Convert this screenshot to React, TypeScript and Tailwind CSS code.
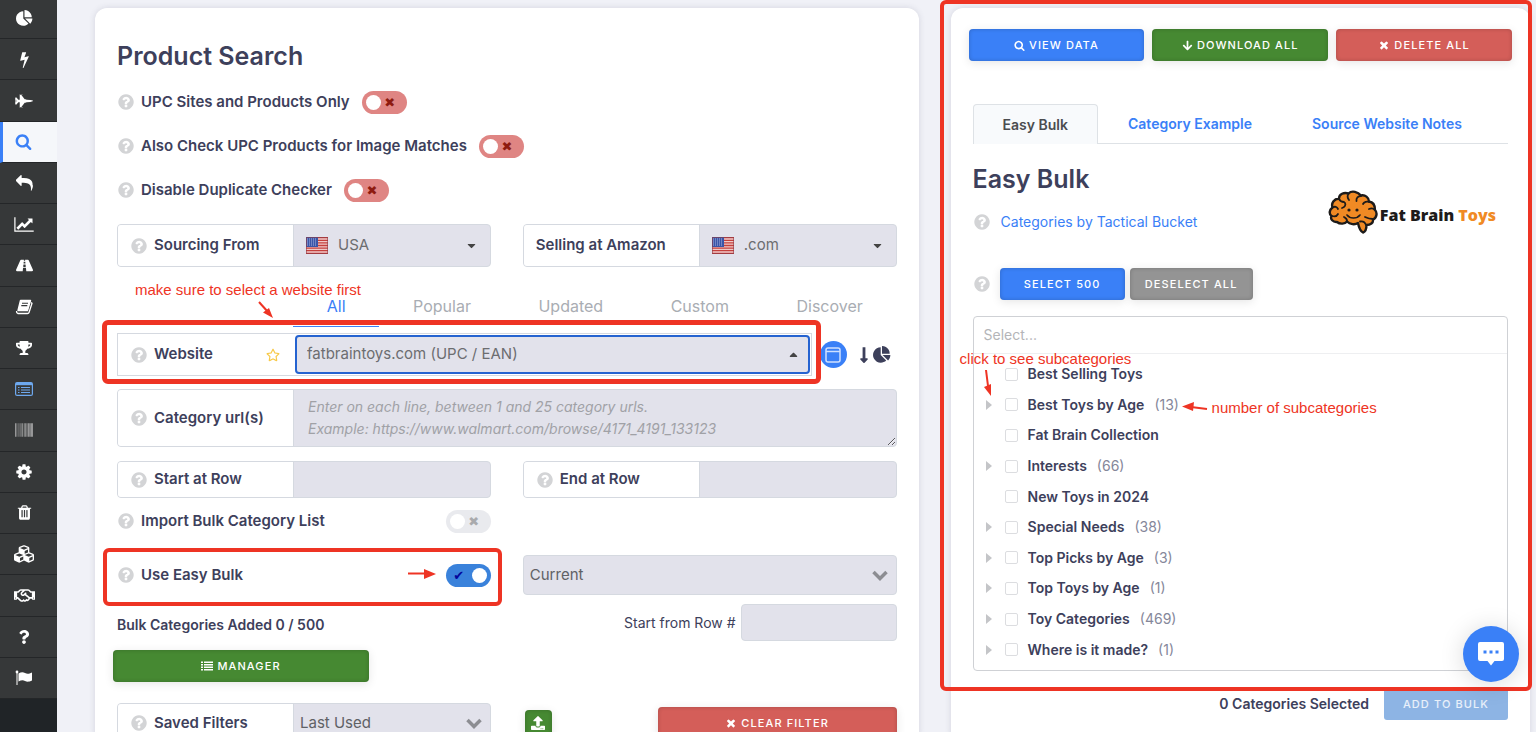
import React from "react";
import {
  FaArrowDown,
  FaBarcode,
  FaCaretDown,
  FaCaretUp,
  FaCubes,
  FaFighterJet,
  FaLongArrowAltDown,
  FaQuestion,
  FaRegHandshake,
  FaRegStar,
  FaRoad,
  FaTrophy,
  FaUpload,
} from "react-icons/fa";

const paths = {
  pie: "M768 890l546 546q-106 108-247.5 168t-298.500 60q-209 0-385.500-103t-279.500-279.500-103-385.500 103-385.500 279.500-279.500 385.500-103v762zm187 6h773q0 157-60 298.500t-168 247.500zm709-128h-768v-768q209 0 385.500 103t279.500 279.500 103 385.500z",
  bolt: "M1333 566q18 20 7 44l-540 1157q-13 25-42 25-4 0-14-2-17-5-25.500-19t-4.500-30l197-808-406 101q-4 1-12 1-18 0-31-11-18-15-13-39l201-825q4-14 16-23t28-9h328q19 0 32 12.500t13 29.500q0 8-5 18l-171 463 396-98q8-2 12-2 19 0 34 15z",
  search:
    "M1216 832q0-185-131.500-316.500t-316.500-131.500-316.500 131.500-131.500 316.500 131.500 316.500 316.500 131.500 316.500-131.500 131.500-316.500zm512 832q0 52-38 90t-90 38q-54 0-90-38l-343-342q-179 124-399 124-143 0-273.500-55.500t-225-150-150-225-55.500-273.500 55.500-273.500 150-225 225-150 273.500-55.500 273.500 55.500 225 150 150 225 55.500 273.500q0 220-124 399l343 343q37 37 37 90z",
  reply:
    "M1792 1120q0 166-127 451-3 7-10.500 24t-13.500 30-13 22q-12 17-28 17-15 0-23.500-10t-8.500-25q0-9 2.500-26.500t2.500-23.500q5-68 5-123 0-112-19.500-200.500t-54-153.500-89-112-115-79.500-137-48.500-161.500-24.500-181-8h-224v256q0 26-19 45t-45 19-45-19l-512-512q-19-19-19-45t19-45l512-512q19-19 45-19t45 19 19 45v256h224q713 0 875 403 53 134 53 333z",
  times:
    "M1490 1322q0 40-28 68l-136 136q-28 28-68 28t-68-28l-294-294-294 294q-28 28-68 28t-68-28l-136-136q-28-28-28-68t28-68l294-294-294-294q-28-28-28-68t28-68l136-136q28-28 68-28t68 28l294 294 294-294q28-28 68-28t68 28l136 136q28 28 28 68t-28 68l-294 294 294 294q28 28 28 68z",
  cog: "M1152 896q0-106-75-181t-181-75-181 75-75 181 75 181 181 75 181-75 75-181zm512-109v222q0 12-8 23t-20 13l-185 28q-19 54-39 91 35 50 107 138 10 12 10 25t-9 23q-27 37-99 108t-94 71q-12 0-26-9l-138-108q-44 23-91 38-16 136-29 186-7 28-36 28h-222q-14 0-24.500-8.500t-11.500-21.500l-28-184q-49-16-90-37l-141 107q-10 9-25 9-14 0-25-11-126-114-165-168-7-10-7-23 0-12 8-23 15-21 51-66.500t54-70.500q-27-50-41-99l-183-27q-13-2-21-12.500t-8-23.500v-222q0-12 8-23t19-13l186-28q14-46 39-92-40-57-107-138-10-12-10-24 0-10 9-23 26-36 98.500-107.500t94.500-71.500q13 0 26 10l138 107q44-23 91-38 16-136 29-186 7-28 36-28h222q14 0 24.500 8.500t11.500 21.500l28 184q49 16 90 37l142-107q9-9 24-9 13 0 25 10 129 119 165 170 7 8 7 22 0 12-8 23-15 21-51 66.500t-54 70.500q26 50 41 98l183 28q13 2 21 12.500t8 23.500z",
  trash:
    "M704 1376v-704q0-14-9-23t-23-9h-64q-14 0-23 9t-9 23v704q0 14 9 23t23 9h64q14 0 23-9t9-23zm256 0v-704q0-14-9-23t-23-9h-64q-14 0-23 9t-9 23v704q0 14 9 23t23 9h64q14 0 23-9t9-23zm256 0v-704q0-14-9-23t-23-9h-64q-14 0-23 9t-9 23v704q0 14 9 23t23 9h64q14 0 23-9t9-23zm-544-992h448l-48-117q-7-9-17-11h-317q-10 2-17 11zm928 32v64q0 14-9 23t-23 9h-96v948q0 83-47 143.500t-113 60.500h-832q-66 0-113-58.500t-47-141.500v-952h-96q-14 0-23-9t-9-23v-64q0-14 9-23t23-9h309l70-167q15-37 54-63t79-26h320q40 0 79 26t54 63l70 167h309q14 0 23 9t9 23z",
  help: "M1024 1376v-192q0-14-9-23t-23-9h-192q-14 0-23 9t-9 23v192q0 14 9 23t23 9h192q14 0 23-9t9-23zm256-672q0-88-55.500-163t-138.500-116-170-41q-243 0-371 213-15 24 8 42l132 100q7 6 19 6 16 0 25-12 53-68 86-92 34-24 86-24 48 0 85.500 26t37.500 59q0 38-20 61t-68 45q-63 28-115.500 86.500t-52.500 125.500v36q0 14 9 23t23 9h192q14 0 23-9t9-23q0-19 21.500-49.500t54.500-49.500q32-18 49-28.500t46-35 44.500-48 28-60.500 12.500-81zm384 192q0 209-103 385.500t-279.500 279.500-385.500 103-385.500-103-279.500-279.500-103-385.500 103-385.500 279.500-279.500 385.500-103 385.500 103 279.500 279.500 103 385.500z",
};

const Glyph = ({ name, className }: { name: keyof typeof paths; className?: string }) => (
  <svg viewBox="0 0 1792 1792" fill="currentColor" className={className} aria-hidden="true">
    <path d={paths[name]} />
  </svg>
);

const LineChart = () => (
  <svg viewBox="0 0 2048 1792" fill="currentColor" className="h-[17px] w-5">
    <path d="M2048 1536v128h-2048v-1536h128v1408h1920zm-128-1248v435q0 21-19.500 29.500t-35.500-7.500l-121-121-633 633q-10 10-23 10t-23-10l-233-233-416 416-192-192 585-585q10-10 23-10t23 10l233 233 464-464-121-121q-16-16-7.500-35.500t29.500-19.500h435q14 0 23 9t9 23z" />
  </svg>
);

const BookIcon = () => (
  <svg viewBox="0 0 18 16" className="h-4 w-[18px]" fill="none" stroke="currentColor" strokeLinejoin="round">
    <path d="M5.500 1.500h10L12.500 11.500H3z" fill="currentColor" strokeWidth="1.400" />
    <path d="M16 3.500l1 .8-3 9.200q-.3 1-1.500 1H3q-1.700-.3-1.500-2.500" strokeWidth="1.300" />
    <path d="M7 4.200h6M6.300 6.600h6" stroke="#363839" strokeWidth="1.100" />
  </svg>
);

const ListAlt = () => (
  <svg viewBox="0 0 18 14" className="h-[14px] w-[18px]" fill="none" stroke="currentColor">
    <rect x=".6" y=".6" width="16.800" height="12.800" rx="1.500" strokeWidth="1.200" />
    <path d="M1 2h16" strokeWidth="2.400" />
    <path d="M3 5.500h1.500M6 5.500h9M3 8h1.500M6 8h9M3 10.500h1.500M6 10.500h9" strokeWidth="1.200" />
  </svg>
);

const FlagIcon = () => (
  <svg viewBox="0 0 18 16" className="h-4 w-[18px]" fill="currentColor">
    <circle cx="2" cy="2" r="1.400" />
    <path d="M1.500 2h1v13h-1zM3.500 3.500C6 2 8 1.800 10 3s4 1 7-.5v8c-3 1.500-5 1.500-7 .4s-4-.8-6.500.7z" />
  </svg>
);

const ListIcon = () => (
  <svg viewBox="0 0 12 10" className="h-2.5 w-3" fill="none" stroke="currentColor" strokeWidth="1.600">
    <path d="M0 1.200h2M3 1.200h9M0 3.700h2M3 3.700h9M0 6.200h2M3 6.200h9M0 8.700h2M3 8.700h9" />
  </svg>
);

const menu = [
  { label: "Dashboard", icon: <Glyph name="pie" className="size-[17px]" /> },
  { label: "Quick actions", icon: <Glyph name="bolt" className="size-[17px]" /> },
  { label: "Jet", icon: <FaFighterJet size={18} /> },
  { label: "Product search", icon: <Glyph name="search" className="size-[17px]" />, active: true },
  { label: "Back", icon: <Glyph name="reply" className="size-[17px]" /> },
  { label: "Charts", icon: <LineChart /> },
  { label: "Roadmap", icon: <FaRoad size={17} /> },
  { label: "Guides", icon: <BookIcon /> },
  { label: "Trophies", icon: <FaTrophy size={16} /> },
  { label: "Lists", icon: <ListAlt />, blue: true },
  { label: "Barcodes", icon: <FaBarcode size={18} className="opacity-70" /> },
  { label: "Settings", icon: <Glyph name="cog" className="size-[18px]" /> },
  { label: "Trash", icon: <Glyph name="trash" className="size-[17px]" /> },
  { label: "Inventory", icon: <FaCubes size={20} /> },
  { label: "Partners", icon: <FaRegHandshake size={21} /> },
  { label: "Help", icon: <FaQuestion size={14} /> },
  { label: "Reports", icon: <FlagIcon /> },
];

const categories = [
  { name: "Best Selling Toys" },
  { name: "Best Toys by Age", count: 13 },
  { name: "Fat Brain Collection" },
  { name: "Interests", count: 66 },
  { name: "New Toys in 2024" },
  { name: "Special Needs", count: 38 },
  { name: "Top Picks by Age", count: 3 },
  { name: "Top Toys by Age", count: 1 },
  { name: "Toy Categories", count: 469 },
  { name: "Where is it made?", count: 1 },
];

const Help = () => <Glyph name="help" className="size-[18px] shrink-0 text-[#d3d4d6]" />;

const Toggle = ({ id, kind }: { id: string; kind: "off" | "on" | "disabled" }) => {
  const track = {
    off: "bg-[#df8583] text-[#8e1b10]",
    on: "bg-[#3a82db] text-[#04059a] flex-row-reverse",
    disabled: "bg-[#e9eaee] text-[#a9aaad]",
  }[kind];
  return (
    <label htmlFor={id} className={`relative flex h-[23px] w-[45px] shrink-0 items-center justify-between rounded-full px-1 ${track}`}>
      <input id={id} type="checkbox" className="sr-only" defaultChecked={kind === "on"} disabled={kind === "disabled"} />
      <span className="size-[15px] rounded-full bg-white" />
      <span className="w-[22px] pr-1 text-center font-['DejaVu_Sans',sans-serif] text-[13px] leading-none">
        {kind === "on" ? "✔" : "✖"}
      </span>
    </label>
  );
};

const UsFlag = () => (
  <svg viewBox="0 0 22 17" className="h-[17px] w-[22px] shrink-0">
    <rect width="22" height="17" fill="#efc9c8" />
    <path d="M0 .7h22M0 3.300h22M0 5.900h22M0 8.500h22M0 11.100h22M0 13.700h22M0 16.300h22" stroke="#c5403c" strokeWidth="1.300" />
    <rect width="12" height="10" fill="#3a55a8" />
    <path d="M1 2h10M1 4h10M1 6h10M1 8h10" stroke="#a9b6e0" strokeDasharray="1 1" />
    <rect x=".5" y=".5" width="21" height="16" fill="none" stroke="#8c3a44" strokeOpacity=".6" />
  </svg>
);

const Chevron = () => (
  <svg viewBox="0 0 16 11" className="pointer-events-none h-[11px] w-4 shrink-0" fill="none" stroke="#8c8d92" strokeWidth="3.500">
    <path d="M1.500 2L8 8.500 14.500 2" />
  </svg>
);

/* label cell on the left, control cell on the right */
const Field = ({
  id,
  label,
  help = true,
  className,
  children,
}: {
  id: string;
  label: string;
  help?: boolean;
  className: string;
  children?: React.ReactNode;
}) => (
  <div className={`flex overflow-hidden rounded-[4px] border border-[#d5d9e0] bg-[#e2e2eb] ${className}`}>
    <label htmlFor={id} className="flex w-[176px] shrink-0 items-center gap-1.5 border-r border-[#d5d9e0] bg-white px-3 text-[15px] font-semibold">
      {help && <Help />}
      {label}
    </label>
    {children}
  </div>
);

const RedArrow = ({ className, width, height, d, head }: { className: string; width: number; height: number; d: string; head: string }) => (
  <svg className={`pointer-events-none absolute ${className}`} width={width} height={height} fill="#ee3424" aria-hidden="true">
    <path d={d} stroke="#ee3424" strokeWidth="2" />
    <path d={head} />
  </svg>
);

const noteText =
  "pointer-events-none absolute whitespace-nowrap font-['Liberation_Sans',Arial,sans-serif] text-[15px] leading-4 text-[#ee3424]";

const btn =
  "flex items-center justify-center gap-1 rounded-[4px] text-[11px] font-medium tracking-widest text-white shadow-[0_2px_10px_rgba(0,0,0,0.1),inset_0_0_4px_rgba(0,0,0,0.2)]";

const Brain = () => (
  <svg viewBox="0 0 50 44" className="h-11 w-[50px]" fill="#f08a24" stroke="#1d1b1a" strokeWidth="2.400" strokeLinejoin="round" strokeLinecap="round">
    <path d="M30 33c1 5 2 8 5 9.500 3-1 3.500-4 3.500-7.500 4 0 7-2 6.500-5.500 4-2 4.500-7 2-9.500 0-5-2-8-6-8.500 0-4-4-7-8-6C30 2 24 0 20.500 3.500 16 2 11 4 11 8.500 6 9 3 13 4.500 17.500 1 20 1 24 3.500 26 2 29 5 32.500 9 32c3 2.500 8 2 10-.5 3 3 8 3.500 11 1.500z" />
    <path d="M11 9c1 2 2.500 3 5 3M20.500 4c-1.500 2-1 4 .5 6M33 6c-3 0-5 2-4.500 5M41 12c-2-1-5 0-6 2M47 20c-2-2-4-2-6-1M4.500 17.500C7 16 9 17 10 19M4 26c3 1 5 0 6-2M19 31c0-2-1-3-3-4M38 35c-1-3-3-4-6-3.500M14 18c3-1 4-3 3-5M37 27c2 1 5 2 8 2" fill="none" strokeWidth="1.800" />
    <path d="M19 25c3 4 10 4 13 0" fill="none" strokeWidth="1.600" />
    <circle cx="21" cy="20" r="1.600" fill="#1d1b1a" stroke="none" />
    <circle cx="29" cy="20" r="1.600" fill="#1d1b1a" stroke="none" />
  </svg>
);

const Sidebar = () => (
  <aside className="w-[57px] shrink-0 overflow-hidden bg-[#202427]">
    <nav className="-mt-0.5 flex h-[701px] flex-col">
      {menu.map((item) => (
        <a
          key={item.label}
          href="#"
          aria-label={item.label}
          className={`flex flex-1 items-center justify-center border-b ${
            item.active
              ? "border-b-[#242628] border-l-[3px] border-l-[#3a80f7] bg-[#f5f7fa] pr-[14px] text-[#3a80f7]"
              : item.blue
                ? "border-[#242628] bg-[#363839] pr-[9px] text-[#6ea8ee]"
                : "border-[#242628] bg-[#363839] pr-[9px] text-white"
          }`}
        >
          {item.icon}
        </a>
      ))}
    </nav>
  </aside>
);

const ProductSearch = () => (
  <section className="rounded-xl bg-white px-[22px] pt-8 shadow-[0_0_6px_rgba(60,60,90,0.15)]">
    <h1 className="text-[25px] leading-8 font-semibold">Product Search</h1>

    <div className="mt-2 text-[15px] font-semibold">
      {["UPC Sites and Products Only", "Also Check UPC Products for Image Matches", "Disable Duplicate Checker"].map((text, i) => (
        <div key={text} className="flex h-11 items-center">
          <Help />
          <label htmlFor={`option-${i}`} className="mr-3 ml-1.5">
            {text}
          </label>
          <Toggle id={`option-${i}`} kind="off" />
        </div>
      ))}
    </div>

    <div className="mt-3 grid grid-cols-2 gap-8">
      <Field id="source" label="Sourcing From" className="h-[43px]">
        <div className="flex flex-1 items-center gap-[10px] px-3">
          <UsFlag />
          <select id="source" className="min-w-0 flex-1 appearance-none bg-transparent text-[15px] text-[#6c6d70]">
            <option>USA</option>
          </select>
          <FaCaretDown size={13} color="#444" />
        </div>
      </Field>
      <Field id="amazon" label="Selling at Amazon" help={false} className="h-[43px]">
        <div className="flex flex-1 items-center gap-[10px] px-3">
          <UsFlag />
          <select id="amazon" className="min-w-0 flex-1 appearance-none bg-transparent text-[15px] text-[#6c6d70]">
            <option>.com</option>
          </select>
          <FaCaretDown size={13} color="#444" />
        </div>
      </Field>
    </div>

    <div className="relative mt-[18px] flex h-[42px] pl-[176px] text-base text-[#a9adb3]">
      <button className="flex-auto border-b border-[#3a80f7] px-8 text-[#3a80f7]">All</button>
      {["Popular", "Updated", "Custom", "Discover"].map((tab) => (
        <button key={tab} className="flex-auto px-8">
          {tab}
        </button>
      ))}
      <span className={`${noteText} -top-[3px] left-[18px]`}>make sure to select a website first</span>
      <RedArrow className="top-4 left-[141px]" width={16} height={18} d="M1 1l9 10" head="M15 17L5 11.500 11 7z" />
    </div>

    <div className="mt-1.5 flex items-center">
      <div className="relative flex h-[43px] flex-1 border border-[#d5d9e0]">
        <div className="flex w-[176px] items-center gap-1.5 pr-[14px] pl-3">
          <Help />
          <label htmlFor="website" className="flex-1 text-[15px] font-semibold">
            Website
          </label>
          <FaRegStar size={14} color="#f7c948" />
        </div>
        <div className="m-px flex flex-1 items-center rounded-[4px] border-2 border-[#2563d0] bg-[#e2e2eb] pr-2 pl-2.5">
          <select id="website" className="flex-1 appearance-none bg-transparent text-[15px] text-[#6c6d70]">
            <option>fatbraintoys.com (UPC / EAN)</option>
          </select>
          <FaCaretUp size={13} color="#444" />
        </div>
        <div className="pointer-events-none absolute -top-[14px] -right-2.5 -bottom-[9px] -left-4 z-10 rounded-md border-[5px] border-[#ee3424]" />
      </div>
      <button aria-label="Open website" className="ml-2 flex size-[27px] items-center justify-center rounded-full bg-[#3a80f7]">
        <svg viewBox="0 0 16 16" className="size-4" fill="none" stroke="#cfe0ff" strokeWidth="1.500">
          <rect x="1" y="1" width="14" height="14" rx="2" />
          <path d="M1 4.500h14" />
        </svg>
      </button>
      <button aria-label="Sort by share" className="ml-2 flex items-center pr-1.5">
        <FaLongArrowAltDown size={18} />
        <Glyph name="pie" className="size-[18px]" />
      </button>
    </div>

    <Field id="urls" label="Category url(s)" className="mt-[13px] h-[58px]">
      <textarea
        id="urls"
        className="block flex-1 resize px-[14px] py-1.5 text-sm leading-[22px] placeholder:text-[#a0a1a6] placeholder:italic"
        placeholder={"Enter on each line, between 1 and 25 category urls.\nExample: https://www.walmart.com/browse/4171_4191_133123"}
      />
    </Field>

    <div className="mt-[14px] grid grid-cols-2 gap-8">
      <Field id="start" label="Start at Row" className="h-[37px]">
        <input id="start" type="text" className="min-w-0 flex-1 px-2" />
      </Field>
      <Field id="end" label="End at Row" className="h-[37px]">
        <input id="end" type="text" className="min-w-0 flex-1 px-2" />
      </Field>
    </div>

    <div className="mt-[7px] grid grid-cols-2 gap-8">
      <div className="flex h-8 items-center gap-1.5">
        <Help />
        <label htmlFor="import" className="flex-1 text-[15px] font-semibold">
          Import Bulk Category List
        </label>
        <Toggle id="import" kind="disabled" />
      </div>
    </div>

    <div className="mt-[18px] grid grid-cols-2 gap-x-8 gap-y-[9px]">
      <div className="relative flex h-10 items-center gap-1.5">
        <Help />
        <label htmlFor="easy" className="flex-1 text-[15px] font-semibold">
          Use Easy Bulk
        </label>
        <Toggle id="easy" kind="on" />
        <RedArrow className="right-[55px] top-3.5" width={28} height={10} d="M0 4.500h18" head="M28 5L16 10V0z" />
        <div className="pointer-events-none absolute -top-[7px] -right-[11px] -bottom-[11px] -left-[14px] rounded-md border-4 border-[#ee3424]" />
      </div>
      <div className="flex items-center rounded-[4px] border border-[#d5d9e0] bg-[#e2e2eb] pr-2 pl-1.5">
        <select aria-label="Bulk list" className="flex-1 appearance-none bg-transparent text-[15px] text-[#606165]">
          <option>Current</option>
        </select>
        <Chevron />
      </div>
      <p className="flex h-[37px] items-center pt-1 text-sm font-semibold">Bulk Categories Added 0 / 500</p>
      <div className="flex items-center justify-end gap-[5px]">
        <label htmlFor="row" className="text-sm">
          Start from Row #
        </label>
        <input id="row" type="text" className="h-[37px] w-[156px] rounded-[4px] border border-[#d5d9e0] bg-[#e2e2eb] px-2" />
      </div>
    </div>

    <button className={`${btn} mt-[9px] -ml-1 h-8 w-64 bg-[#468932]`}>
      <ListIcon />
      MANAGER
    </button>

    <div className="mt-[21px] grid grid-cols-2 gap-8">
      <Field id="saved" label="Saved Filters" className="h-10">
        <div className="flex flex-1 items-center pr-2 pl-1.5">
          <select id="saved" className="min-w-0 flex-1 appearance-none bg-transparent text-[15px] text-[#606165]">
            <option>Last Used</option>
          </select>
          <Chevron />
        </div>
      </Field>
      <div className="flex items-center justify-between pl-0.5">
        <button aria-label="Upload filter" className={`${btn} size-[27px] bg-[#468932]`}>
          <FaUpload size={14} />
        </button>
        <button className={`${btn} h-8 w-[239px] bg-[#d45e59]`}>
          <Glyph name="times" className="size-3" />
          CLEAR FILTER
        </button>
      </div>
    </div>
  </section>
);

const EasyBulk = () => (
  <section className="rounded-xl bg-white px-[22px] shadow-[0_0_6px_rgba(60,60,90,0.15)]">
    <div className="relative pt-[21px]">
      <div className="-mx-1 grid grid-cols-3 gap-2">
        <button className={`${btn} h-8 bg-[#3a80f7]`}>
          <Glyph name="search" className="size-[11px]" />
          VIEW DATA
        </button>
        <button className={`${btn} h-8 bg-[#468932]`}>
          <FaArrowDown size={11} />
          DOWNLOAD ALL
        </button>
        <button className={`${btn} h-8 bg-[#d45e59]`}>
          <Glyph name="times" className="size-3" />
          DELETE ALL
        </button>
      </div>

      <div className="mt-[43px] flex h-10 border-b border-[#dee2e6] text-sm font-semibold text-[#3a80f7]">
        <button className="-mb-px rounded-t-[4px] border border-b-0 border-[#dee2e6] bg-[#f8fafc] px-[29px] text-[#4b4c4f]">Easy Bulk</button>
        <button className="px-[30px]">Category Example</button>
        <button className="px-[30px]">Source Website Notes</button>
      </div>

      <div className="mt-5 flex items-end justify-between">
        <div>
          <h2 className="text-[25px] leading-[30px] font-semibold">Easy Bulk</h2>
          <div className="mt-4 flex items-center gap-2.5">
            <Help />
            <a href="#" className="text-sm leading-6 text-[#3a80f7]">
              Categories by Tactical Bucket
            </a>
          </div>
        </div>
        <div className="mr-3 flex items-center gap-0.5">
          <Brain />
          <span className="pt-1.5 font-['Open_Sans',sans-serif] text-base leading-5 font-extrabold text-[#1d1b1a]">
            Fat Brain <span className="text-[#f08a24]">Toys</span>
          </span>
        </div>
      </div>

      <div className="mt-[34px] flex items-center gap-[5px]">
        <Help />
        <button className={`${btn} ml-1 h-8 w-[125px] bg-[#3a80f7]`}>SELECT 500</button>
        <button className={`${btn} h-8 w-[123px] bg-[#949494]`}>DESELECT ALL</button>
      </div>

      <div className="relative mt-4 rounded-[4px] border border-[#cfd1d5]">
        <input
          type="text"
          aria-label="Select categories"
          placeholder="Select..."
          className="h-[37px] w-full border-b border-[#eeeff1] px-2.5 pb-0.5 text-sm placeholder:text-[#b4b5b8]"
        />
        <ul className="flex h-[316px] flex-col py-[5px]">
          {categories.map((c) => (
            <li key={c.name} className="flex flex-1 items-center pl-3 text-sm">
              <span className="w-[19px]">
                {c.count && (
                  <button aria-label={`Expand ${c.name}`} className="block border-y-[5px] border-l-[6px] border-y-transparent border-l-[#c4c5c8]" />
                )}
              </span>
              <label className="flex items-center font-semibold">
                <input type="checkbox" className="mr-2.5 size-[13px] appearance-none rounded-[2px] border border-[#dcdde0] bg-white" />
                {c.name}
              </label>
              {c.count && <span className="ml-2.5 text-[#85879a]">({c.count})</span>}
            </li>
          ))}
        </ul>
        <span className={`${noteText} top-[34px] -left-[14px]`}>click to see subcategories</span>
        <RedArrow className="top-[53px] left-2" width={10} height={26} d="M4 0l2 16" head="M9 26L2 17l7-3z" />
        <RedArrow className="top-[85px] left-[208px]" width={26} height={10} d="M9 5l16 2" head="M0 4.500L12 0l-1 9z" />
        <span className={`${noteText} top-[83px] left-[238px]`}>number of subcategories</span>
      </div>

      <div className="pointer-events-none absolute -top-2 -right-6 -bottom-5 -left-[33px] rounded-md border-4 border-[#ee3424]" />
    </div>

    <div className="mt-[17px] flex items-center justify-end gap-[15px]">
      <span className="text-sm font-semibold">0 Categories Selected</span>
      <button className="h-8 w-[124px] rounded-[3px] bg-[#8db4e4] text-[11px] font-medium tracking-widest text-white/80">ADD TO BULK</button>
    </div>
  </section>
);

export default function App() {
  return (
    <div className="flex h-screen overflow-hidden bg-[#f0f1f7] font-[Inter,sans-serif] text-[#3d405b]">
      <Sidebar />
      <main className="grid flex-1 grid-cols-[823fr_579fr] gap-8 pt-2 pr-1.5 pl-[38px]">
        <ProductSearch />
        <EasyBulk />
      </main>
      <button
        aria-label="Open chat"
        className="fixed right-[17px] bottom-[50px] z-20 flex size-14 items-center justify-center rounded-full bg-[#3a80f7] shadow-[0_2px_24px_rgba(0,0,0,0.15)]"
      >
        <svg viewBox="0 0 26 24" className="h-6 w-[26px]">
          <path d="M2 0h22q2 0 2 2v15q0 2-2 2h-7.500L13 23.500 9.500 19H2q-2 0-2-2V2Q0 0 2 0z" fill="#fff" />
          <path d="M5.500 8.500h3v3h-3zM11.500 8.500h3v3h-3zM17.500 8.500h3v3h-3z" fill="#3a80f7" />
        </svg>
      </button>
    </div>
  );
}
